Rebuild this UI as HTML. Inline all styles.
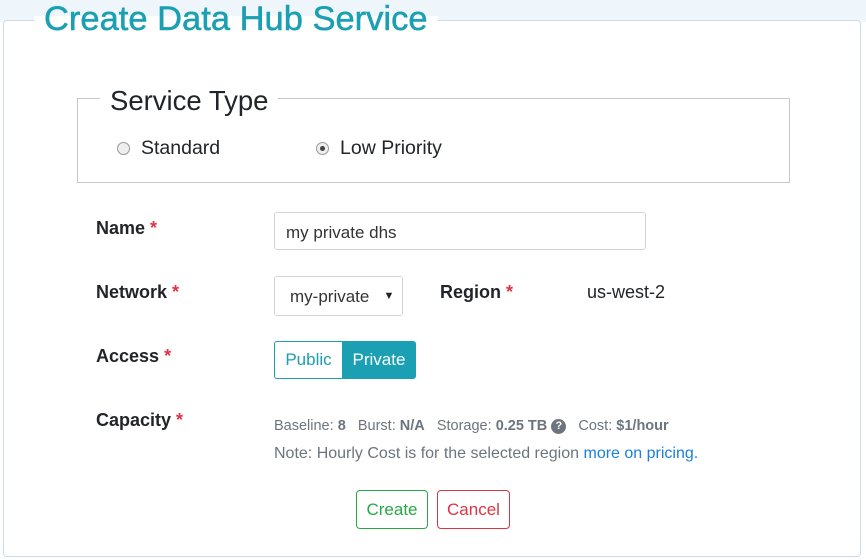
<!DOCTYPE html>
<html><head><style>
body{margin:0;width:866px;height:560px;background:#fff;font-family:"Liberation Sans",sans-serif;color:#212529;position:relative;overflow:hidden}
.bg{position:absolute;left:0;top:0;width:866px;height:22px;background:#eef6fc}
.card{position:absolute;left:3px;top:20px;width:856px;height:535px;border:1px solid #c9dde9;border-radius:4px;background:#fff}
.title{position:absolute;padding:0 10px;font-size:34.5px;color:#1a9fb3;background:linear-gradient(#eef6fc 0 19px,#fff 19px);line-height:44px;letter-spacing:0;-webkit-text-stroke:0.5px #1a9fb3}
.a{position:absolute;white-space:nowrap}
.fs{position:absolute;left:77px;top:98px;width:711px;height:83px;border:1px solid #c8c8c8}
.lab{font-weight:bold;font-size:18px}
.req{color:#dc3545}
.radio{display:inline-block;width:11px;height:11px;border:1px solid #999;border-radius:50%;background:#eee;vertical-align:middle;position:relative}
.inp{border:1px solid #ced4da;border-radius:3px;background:#fff}
</style></head><body>
<div class="bg"></div>
<div class="card"></div>
<div class="a title" style="left:34px;top:-3px">Create Data Hub Service</div>
<div class="fs"></div>
<div class="a" style="left:100px;top:85px;background:#fff;padding:0 10px;font-size:27.5px;line-height:32px">Service Type</div>
<div class="a" style="left:117px;top:137px;font-size:19.5px"><span class="radio"></span><span style="margin-left:11px">Standard</span></div>
<div class="a" style="left:316px;top:137px;font-size:19.5px"><span class="radio"><span style="position:absolute;left:3px;top:3px;width:5px;height:5px;border-radius:50%;background:#444"></span></span><span style="margin-left:11px">Low Priority</span></div>
<div class="a lab" style="left:96px;top:218px">Name <span class="req">*</span></div>
<div class="a inp" style="left:274px;top:212px;width:370px;height:36px"></div>
<div class="a" style="left:286px;top:223px;font-size:17px;color:#333">my private dhs</div>
<div class="a lab" style="left:96px;top:282px">Network <span class="req">*</span></div>
<div class="a inp" style="left:274px;top:276px;width:127px;height:38px;overflow:hidden"><span style="position:absolute;left:15px;top:10px;font-size:17px;color:#333">my-private</span><span style="position:absolute;right:0;top:0;width:26px;height:38px;background:#fff;font-size:11px;line-height:38px;text-align:center">▼</span></div>
<div class="a lab" style="left:440px;top:282px">Region <span class="req">*</span></div>
<div class="a" style="left:587px;top:282px;font-size:18px">us-west-2</div>
<div class="a lab" style="left:96px;top:346px">Access <span class="req">*</span></div>
<div class="a" style="left:274px;top:341px;width:67px;height:36px;border:1px solid #1a9fb3;border-radius:3px 0 0 3px;color:#1a9fb3;font-size:17px;line-height:36px;text-align:center">Public</div>
<div class="a" style="left:342px;top:341px;width:74px;height:38px;background:#1a9fb3;border-radius:0 3px 3px 0;color:#fff;font-size:17px;line-height:38px;text-align:center">Private</div>
<div class="a lab" style="left:96px;top:410px">Capacity <span class="req">*</span></div>
<div class="a" style="left:274px;top:418px;font-size:14.5px;color:#6c757d">Baseline: <b>8</b>&nbsp;&nbsp; Burst: <b>N/A</b>&nbsp;&nbsp; Storage: <b>0.25 TB</b> <span style="display:inline-block;width:15px;height:15px;border-radius:50%;background:#6c757d;color:#fff;font-size:11px;font-weight:bold;text-align:center;line-height:15px;vertical-align:1px">?</span>&nbsp;&nbsp; Cost: <b>$1/hour</b></div>
<div class="a" style="left:274px;top:445px;font-size:16px;color:#6c757d">Note: Hourly Cost is for the selected region <span style="color:#1a7fe0">more on pricing.</span></div>
<div class="a" style="left:356px;top:490px;width:70px;height:37px;border:1px solid #28a745;border-radius:4px;color:#28a745;font-size:17px;line-height:37px;text-align:center">Create</div>
<div class="a" style="left:437px;top:490px;width:71px;height:37px;border:1px solid #dc3545;border-radius:4px;color:#dc3545;font-size:17px;line-height:37px;text-align:center">Cancel</div>
</body></html>
